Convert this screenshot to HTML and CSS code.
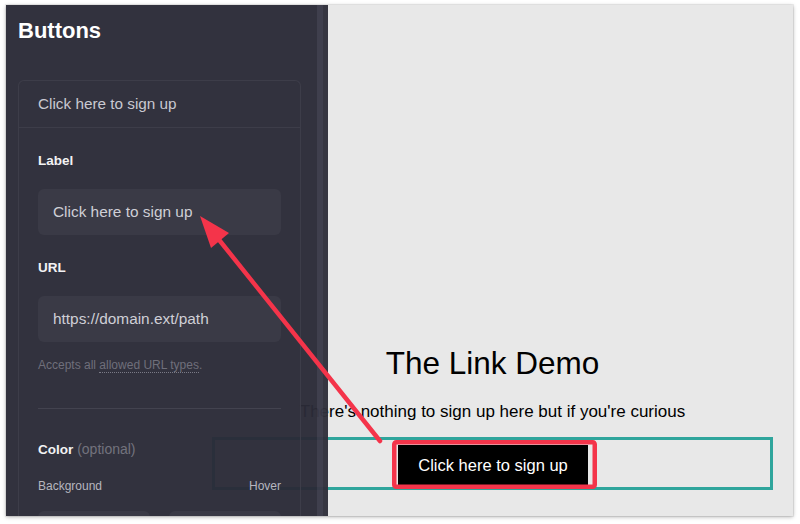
FILE: index.html
```html
<!DOCTYPE html>
<html>
<head>
<meta charset="utf-8">
<link rel="stylesheet" href="styles.css">
</head>
<body>
<div class="frame">
  <div class="window">
    <div class="preview">
      <div class="demo">
        <h1 class="demo-title">The Link Demo</h1>
        <p class="demo-text">There's nothing to sign up here but if you're curious</p>
        <div class="demo-box">
          <a class="demo-button">Click here to sign up</a>
        </div>
      </div>
    </div>
    <aside class="sidebar">
      <div class="sidebar-main">
        <h2 class="panel-title">Buttons</h2>
        <div class="card">
          <div class="card-head">Click here to sign up</div>
          <div class="card-body">
            <div class="field">
              <div class="field-label">Label</div>
              <div class="input">Click here to sign up</div>
            </div>
            <div class="field">
              <div class="field-label">URL</div>
              <div class="input">https://domain.ext/path</div>
              <div class="help">Accepts all <span class="dotted">allowed URL types</span>.</div>
            </div>
            <div class="divider"></div>
            <div class="color-label"><b>Color</b> <span class="optional">(optional)</span></div>
            <div class="color-row">
              <span>Background</span>
              <span>Hover</span>
            </div>
            <div class="swatches">
              <div class="swatch"></div>
              <div class="swatch"></div>
            </div>
          </div>
        </div>
      </div>
      <div class="scroll-track"></div>
      <div class="scroll-edge"></div>
    </aside>
  </div>
</div>
<svg class="annotations" width="800" height="524" viewBox="0 0 800 524">
  <line x1="380" y1="441" x2="216" y2="236" stroke="#f4344a" stroke-width="4.5" stroke-linecap="round"/>
  <polygon points="200,216 229,233 211,248" fill="#f4344a"/>
  <rect x="394.25" y="442.25" width="200.5" height="44.5" rx="2" fill="none" stroke="#f4344a" stroke-width="4.5"/>
</svg>
</body>
</html>
```
FILE: styles.css
```css
* { box-sizing: border-box; }
html, body {
  margin: 0;
  padding: 0;
  background: #ffffff;
  width: 800px;
  height: 524px;
  overflow: hidden;
  font-family: "Liberation Sans", Arial, sans-serif;
}
.frame {
  padding: 5px 7px 8px 6px;
}
.window {
  position: relative;
  width: 787px;
  height: 511px;
  overflow: hidden;
  background: #e8e8e8;
  box-shadow: 0 0 0 1px rgba(0,0,0,0.06), 0 1px 4px rgba(0,0,0,0.3);
}
.preview {
  height: 100%;
  padding: 340px 0 0 206px;
}
.demo {
  width: 561px;
  display: flex;
  flex-direction: column;
  align-items: center;
}
.demo-title {
  margin: 0;
  font-size: 31.5px;
  line-height: 36px;
  font-weight: normal;
  color: #000;
}
.demo-text {
  margin: 21px 0 0;
  font-size: 17px;
  line-height: 20px;
  color: #000;
}
.demo-box {
  align-self: stretch;
  margin-top: 15px;
  height: 53px;
  border: 3px solid #2fa59c;
  padding: 5px 0 0;
  display: flex;
  justify-content: center;
}
.demo-button {
  width: 190px;
  height: 40px;
  background: #000;
  color: #fff;
  font-size: 16.5px;
  display: flex;
  align-items: center;
  justify-content: center;
  margin-left: 1px;
}
.sidebar {
  position: absolute;
  left: 0;
  top: 0;
  bottom: 0;
  width: 322px;
  display: flex;
}
.sidebar-main {
  width: 311px;
  background: rgba(42, 42, 55, 0.965);
  padding: 13px 16px 0 12px;
}
.scroll-track {
  width: 6px;
  background: rgba(57, 57, 71, 0.97);
}
.scroll-edge {
  width: 5px;
  background: rgba(47, 47, 59, 0.97);
}
.panel-title {
  margin: 0;
  font-size: 22px;
  line-height: 26px;
  font-weight: bold;
  color: #ffffff;
}
.card {
  margin-top: 36px;
  border: 1px solid #3d3d49;
  border-bottom: none;
  border-radius: 6px 6px 0 0;
  height: 500px;
}
.card-head {
  height: 47px;
  border-bottom: 1px solid #3d3d49;
  padding: 0 19px;
  display: flex;
  align-items: center;
  font-size: 15.3px;
  color: #c9c9d1;
}
.card-body {
  padding: 25px 19px 0;
}
.field + .field {
  margin-top: 25px;
}
.field-label {
  font-size: 13.5px;
  line-height: 16px;
  font-weight: bold;
  color: #f2f2f4;
}
.input {
  margin-top: 20px;
  height: 46px;
  border-radius: 6px;
  background: #3a3a46;
  padding: 0 15px;
  display: flex;
  align-items: center;
  font-size: 15.4px;
  color: #cfcfd6;
}
.help {
  margin-top: 16px;
  font-size: 12px;
  line-height: 15px;
  color: #6f6f7b;
}
.dotted {
  border-bottom: 1px dotted #7a7a86;
}
.divider {
  margin-top: 35px;
  height: 1px;
  background: #43434f;
}
.color-label {
  margin-top: 32px;
  font-size: 14px;
  line-height: 17px;
}
.color-label b {
  font-size: 13.5px;
  color: #f2f2f4;
}
.optional {
  color: #72727d;
}
.color-row {
  margin-top: 21px;
  display: flex;
  justify-content: space-between;
  font-size: 12px;
  line-height: 15px;
  color: #b6b6bf;
}
.swatches {
  margin-top: 17px;
  display: flex;
  gap: 19px;
}
.swatch {
  flex: 1;
  height: 46px;
  border-radius: 6px;
  background: #3a3a46;
}
.annotations {
  position: absolute;
  left: 0;
  top: 0;
  pointer-events: none;
}
```
